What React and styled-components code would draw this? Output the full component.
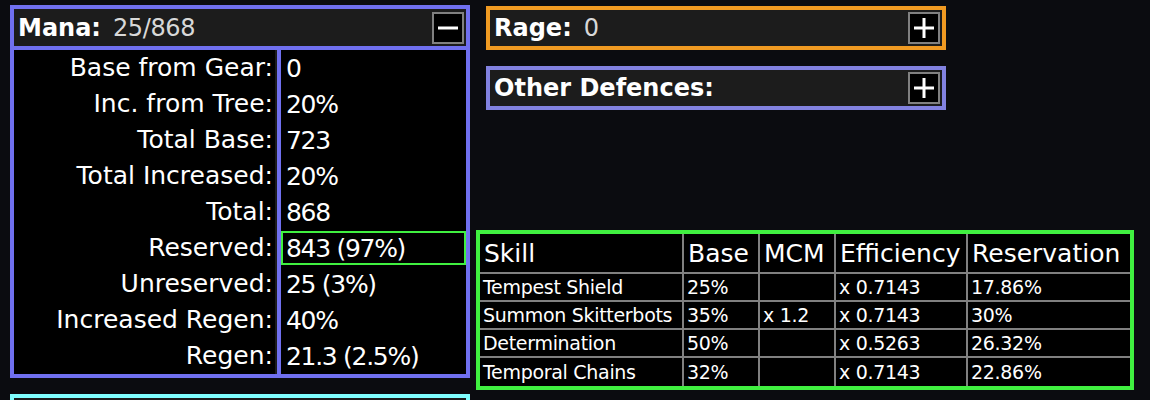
import React from 'react';
import styled, { createGlobalStyle, css } from 'styled-components';

const GlobalStyle = createGlobalStyle`
body {
  margin: 0;
  background: #0b0c10;
  font-family: "DejaVu Sans", "Liberation Sans", sans-serif;
  color: #fff;
}
`;

const Page = styled.div`
display: flex;
align-items: flex-start;
padding: 5px 0 0 10px;
height: 395px;
overflow: hidden;
`;

const LeftColumn = styled.div`
width: 460px;
display: flex;
flex-direction: column;
gap: 16px;
`;

const RightColumn = styled.div`
margin-left: 16px;
width: 460px;
display: flex;
flex-direction: column;
gap: 16px;
padding-top: 1px;
`;

const Panel = styled.section`
border: 4px solid ${(p) => p.$color};
background: #000;
`;

const PanelHeader = styled.div`
height: 36px;
box-sizing: border-box;
background: #1c1c1c;
display: flex;
align-items: center;
padding: 0 2px 0 4px;
${(p) => p.$open && css`
  height: 41px;
  border-bottom: 4px solid ${p.$color};
`}
`;

const Title = styled.span`
font-weight: bold;
font-size: 24px;
`;

const TitleValue = styled.span`
font-size: 24px;
color: #d8d8d8;
margin-left: 12px;
letter-spacing: -0.4px;
`;

const ToggleButton = styled.button`
margin-left: auto;
width: 32px;
height: 32px;
box-sizing: border-box;
border: 2px solid #808080;
background: #000;
padding: 0;
display: grid;
place-items: center;
`;

const StatGrid = styled.div`
display: grid;
grid-template-columns: 263px 1fr;
grid-auto-rows: 36px;
column-gap: 4px;
background: #7070f0;
`;

const LabelCell = styled.div`
background: #000;
border-right: 2px solid #1c1c1c;
text-align: right;
padding-right: 2px;
font-size: 25px;
line-height: 36px;
white-space: nowrap;
`;

const ValueCell = styled.div`
background: #000;
display: flex;
align-items: center;
padding-left: 5px;
font-size: 25px;
letter-spacing: -1.3px;
box-sizing: border-box;
${(p) => p.$highlight && css`
  border-top: 1px solid #000;
  border-bottom: 1px solid #000;
  box-shadow: inset 0 0 0 2px #40f040;
`}
`;

const ReservationTable = styled.div`
margin: 104px 0 0 -10px;
width: 650px;
border: 4px solid #40f040;
display: grid;
grid-template-columns: 202px 74px 74px 130px 162px;
grid-template-rows: 38px repeat(3, 26px) 28px;
gap: 2px;
background: #808080;
`;

const HeadCell = styled.div`
background: #000;
display: flex;
align-items: center;
padding-left: 4px;
font-size: 25px;
white-space: nowrap;
overflow: hidden;
`;

const Cell = styled.div`
background: #000;
display: flex;
align-items: center;
padding-left: 3px;
font-size: 19px;
letter-spacing: -0.3px;
white-space: nowrap;
overflow: hidden;
`;

const Icon = ({ plus }) => (
  <svg width="20" height="20" viewBox="0 0 20 20">
    <rect x="0" y="8.5" width="20" height="3" fill="#fff" />
    {plus && <rect x="8.5" y="0" width="3" height="20" fill="#fff" />}
  </svg>
);

const manaRows = [
  ['Base from Gear:', '0'],
  ['Inc. from Tree:', '20%'],
  ['Total Base:', '723'],
  ['Total Increased:', '20%'],
  ['Total:', '868'],
  ['Reserved:', '843 (97%)', true],
  ['Unreserved:', '25 (3%)'],
  ['Increased Regen:', '40%'],
  ['Regen:', '21.3 (2.5%)'],
];

const skills = [
  ['Tempest Shield', '25%', '', 'x 0.7143', '17.86%'],
  ['Summon Skitterbots', '35%', 'x 1.2', 'x 0.7143', '30%'],
  ['Determination', '50%', '', 'x 0.5263', '26.32%'],
  ['Temporal Chains', '32%', '', 'x 0.7143', '22.86%'],
];

export default function App() {
  return (
    <>
      <GlobalStyle />
      <Page>
        <LeftColumn>
          <Panel $color="#7070f0">
            <PanelHeader $open $color="#7070f0">
              <Title>Mana:</Title>
              <TitleValue>25/868</TitleValue>
              <ToggleButton><Icon /></ToggleButton>
            </PanelHeader>
            <StatGrid>
              {manaRows.map(([label, value, hl]) => (
                <React.Fragment key={label}>
                  <LabelCell>{label}</LabelCell>
                  <ValueCell $highlight={hl}>{value}</ValueCell>
                </React.Fragment>
              ))}
            </StatGrid>
          </Panel>
          <Panel $color="#80ffff">
            <PanelHeader>
              <Title>&nbsp;</Title>
            </PanelHeader>
          </Panel>
        </LeftColumn>

        <RightColumn>
          <Panel $color="#f09a22">
            <PanelHeader>
              <Title>Rage:</Title>
              <TitleValue>0</TitleValue>
              <ToggleButton><Icon plus /></ToggleButton>
            </PanelHeader>
          </Panel>
          <Panel $color="#8282e0">
            <PanelHeader>
              <Title>Other Defences:</Title>
              <ToggleButton><Icon plus /></ToggleButton>
            </PanelHeader>
          </Panel>

          <ReservationTable>
            {['Skill', 'Base', 'MCM', 'Efficiency', 'Reservation'].map((h) => (
              <HeadCell key={h}>{h}</HeadCell>
            ))}
            {skills.map((row) =>
              row.map((v, i) => <Cell key={row[0] + i}>{v}</Cell>)
            )}
          </ReservationTable>
        </RightColumn>
      </Page>
    </>
  );
}
